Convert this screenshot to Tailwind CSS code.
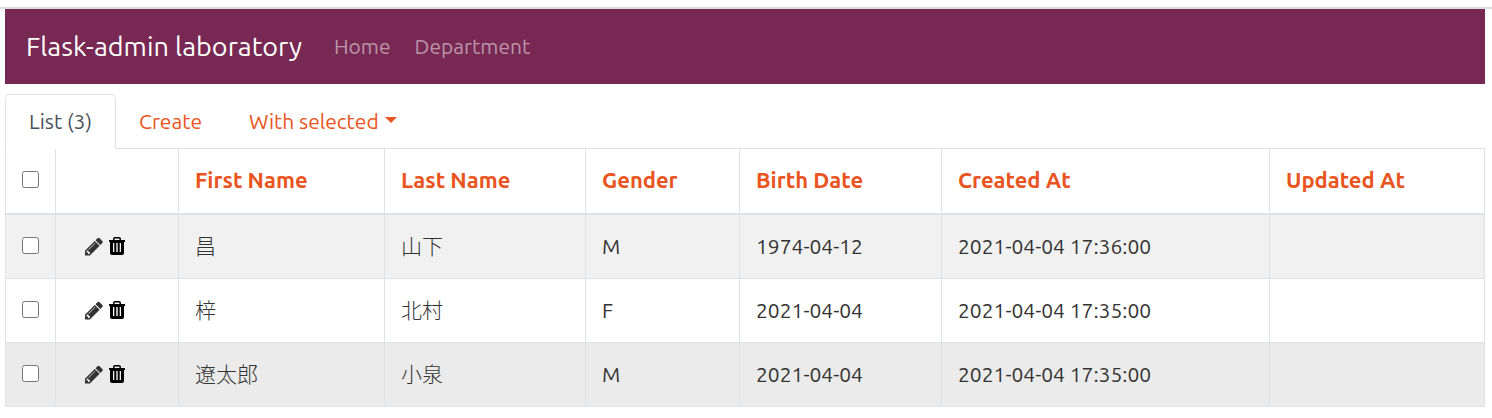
<!DOCTYPE html>
<html lang="en">
<head>
    <meta charset="UTF-8">
    <meta name="viewport" content="width=device-width, initial-scale=1.0">
    <title>Flask-admin laboratory</title>
    <script src="https://cdn.jsdelivr.net/npm/@tailwindcss/browser@4"></script>
</head>
<body class="bg-white text-[#333333] font-['Ubuntu','Noto_Sans','Noto_Sans_CJK_JP',sans-serif] text-[21px] leading-8">
<svg class="hidden">
    <symbol id="pencil" viewBox="0 0 1536 1792">
        <path d="M363 1536l91-91-235-235-91 91v107h128v128h107zM886 608q0-22-22-22-10 0-17 7l-542 542q-7 7-7 17 0 22 22 22 10 0 17-7l542-542q7-7 7-17zM832 416l416 416-832 832H0v-416zM1515 512q0 53-37 90l-166 166-416-416 166-165q36-38 90-38 53 0 91 38l235 234q37 39 37 91z"/>
    </symbol>
    <symbol id="trash" viewBox="0 0 16 18">
        <path fill-rule="evenodd" d="M4 3V2q0-2 2-2h4q2 0 2 2v1h4v2h-1v11q0 2-2 2H3q-2 0-2-2V5H0V3zM5.500 3h5V2q0-.6-.6-.6H6.100q-.6 0-.6.600zM4 6v9h1.300V6zM7.300 6v9h1.400V6zM10.700 6v9H12V6z"/>
    </symbol>
</svg>

<div class="mt-[7px] border-t-2 border-[#dadce0] pl-[5px] pr-[7px]">
    <nav class="flex items-center bg-[#772953] px-[21px] pb-[2px] h-[75px]">
        <a href="#" class="mr-8 text-[27px] text-white">Flask-admin laboratory</a>
        <ul class="flex gap-6 text-white/50">
            <li><a href="#" class="hover:text-white">Home</a></li>
            <li><a href="#" class="hover:text-white">Department</a></li>
        </ul>
    </nav>

    <ul class="mt-[10px] flex border-b border-[#dee2e6] text-[#e95420]">
        <li class="-mb-px">
            <a href="#" class="block rounded-t-[5px] border border-b-white border-[#dee2e6] bg-white px-[23px] pt-[10px] pb-[11px] text-[#495057]">List (3)</a>
        </li>
        <li><a href="#" class="block px-[23px] py-[11px]">Create</a></li>
        <li>
            <button type="button" class="flex items-center gap-[6px] px-6 py-[11px]">
                With selected
                <svg class="mb-[2px] w-3 h-[6px]" viewBox="0 0 12 6" fill="currentColor"><path d="M0 0h12L6 6z"/></svg>
            </button>
        </li>
    </ul>

    <div class="pr-px">
        <table class="w-full table-fixed border-collapse border border-t-0 border-[#dee2e6] text-left">
            <colgroup>
                <col class="w-[50px]">
                <col class="w-[123px]">
                <col class="w-[206px]">
                <col class="w-[201px]">
                <col class="w-[154px]">
                <col class="w-[202px]">
                <col class="w-[328px]">
                <col class="w-[215px]">
            </colgroup>
            <thead class="text-[22px] text-[#e95420]">
            <tr class="h-[65px] border-b-2 border-[#dee2e6]">
                <th class="border-r border-[#dee2e6] pl-4 pb-[3px]"><input type="checkbox" aria-label="Select all records" class="block size-[17px]"></th>
                <th class="border-r border-[#dee2e6]"></th>
                <th class="border-r border-[#dee2e6] px-4 pb-[2px]"><a href="#">First Name</a></th>
                <th class="border-r border-[#dee2e6] px-4 pb-[2px]"><a href="#">Last Name</a></th>
                <th class="border-r border-[#dee2e6] px-4 pb-[2px]"><a href="#">Gender</a></th>
                <th class="border-r border-[#dee2e6] px-4 pb-[2px]"><a href="#">Birth Date</a></th>
                <th class="border-r border-[#dee2e6] px-4 pb-[2px]"><a href="#">Created At</a></th>
                <th class="px-4 pb-[2px]"><a href="#">Updated At</a></th>
            </tr>
            </thead>
            <tbody>
            <tr class="h-16 border-b border-[#dee2e6] bg-[#f1f1f1]">
                <td class="border-r border-[#dee2e6] pl-4 pb-px"><input type="checkbox" aria-label="Select record" class="block size-[17px]"></td>
                <td class="border-r border-[#dee2e6] pl-[29px]">
                    <div class="flex items-center gap-[6px]">
                        <a href="#" aria-label="Edit record"><svg class="w-[18px] h-[21px]" fill="#333333"><use href="#pencil"/></svg></a>
                        <button type="button" aria-label="Delete record"><svg class="w-4 h-[18px]" fill="#000000"><use href="#trash"/></svg></button>
                    </div>
                </td>
                <td class="border-r border-[#dee2e6] px-4 font-light" lang="ja">昌</td>
                <td class="border-r border-[#dee2e6] px-4 font-light" lang="ja">山下</td>
                <td class="border-r border-[#dee2e6] px-4">M</td>
                <td class="border-r border-[#dee2e6] px-4">1974-04-12</td>
                <td class="border-r border-[#dee2e6] px-4">2021-04-04 17:36:00</td>
                <td></td>
            </tr>
            <tr class="h-16 border-b border-[#dee2e6]">
                <td class="border-r border-[#dee2e6] pl-4 pb-px"><input type="checkbox" aria-label="Select record" class="block size-[17px]"></td>
                <td class="border-r border-[#dee2e6] pl-[29px]">
                    <div class="flex items-center gap-[6px]">
                        <a href="#" aria-label="Edit record"><svg class="w-[18px] h-[21px]" fill="#333333"><use href="#pencil"/></svg></a>
                        <button type="button" aria-label="Delete record"><svg class="w-4 h-[18px]" fill="#000000"><use href="#trash"/></svg></button>
                    </div>
                </td>
                <td class="border-r border-[#dee2e6] px-4 font-light" lang="ja">梓</td>
                <td class="border-r border-[#dee2e6] px-4 font-light" lang="ja">北村</td>
                <td class="border-r border-[#dee2e6] px-4">F</td>
                <td class="border-r border-[#dee2e6] px-4">2021-04-04</td>
                <td class="border-r border-[#dee2e6] px-4">2021-04-04 17:35:00</td>
                <td></td>
            </tr>
            <tr class="h-16 border-b border-[#dee2e6] bg-[#ebebeb]">
                <td class="border-r border-[#dee2e6] pl-4 pb-px"><input type="checkbox" aria-label="Select record" class="block size-[17px]"></td>
                <td class="border-r border-[#dee2e6] pl-[29px]">
                    <div class="flex items-center gap-[6px]">
                        <a href="#" aria-label="Edit record"><svg class="w-[18px] h-[21px]" fill="#333333"><use href="#pencil"/></svg></a>
                        <button type="button" aria-label="Delete record"><svg class="w-4 h-[18px]" fill="#000000"><use href="#trash"/></svg></button>
                    </div>
                </td>
                <td class="border-r border-[#dee2e6] px-4 font-light" lang="ja">遼太郎</td>
                <td class="border-r border-[#dee2e6] px-4 font-light" lang="ja">小泉</td>
                <td class="border-r border-[#dee2e6] px-4">M</td>
                <td class="border-r border-[#dee2e6] px-4">2021-04-04</td>
                <td class="border-r border-[#dee2e6] px-4">2021-04-04 17:35:00</td>
                <td></td>
            </tr>
            </tbody>
        </table>
    </div>
</div>
</body>
</html>
